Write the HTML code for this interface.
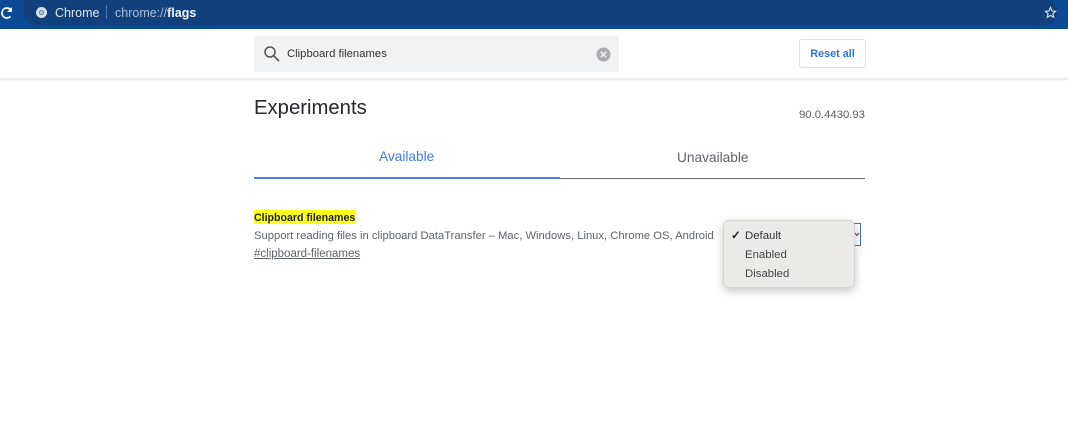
<!DOCTYPE html>
<html><head><meta charset="utf-8">
<style>
html,body{margin:0;padding:0;background:#fff}
body{width:1068px;height:448px;position:relative;overflow:hidden;font-family:"Liberation Sans",sans-serif}
.a{position:absolute;white-space:nowrap}
</style></head><body>
<div class="a" style="left:0;top:0;width:1068px;height:29px;background:#0b4a94"></div>
<div class="a" style="left:24px;top:0;width:1034px;height:25px;background:#12407c;border-radius:0 12px 12px 12px"></div>
<svg class="a" style="left:0;top:4px" width="14" height="18" viewBox="0 0 14 18"><path d="M10.500 12.500A5 5 0 1 1 10.500 5.500" fill="none" stroke="#fff" stroke-width="1.700"/><path d="M12 3v5H7z" fill="#fff"/></svg>
<svg class="a" style="left:35px;top:6px" width="13" height="13" viewBox="0 0 13 13"><circle cx="6.500" cy="6.500" r="5.500" fill="#d5dfea"/><circle cx="6.500" cy="6.500" r="2.600" fill="#5f82ad"/><circle cx="6.500" cy="6.500" r="1.800" fill="#fff" opacity=".5"/></svg>
<div class="a" style="left:55px;top:6px;font-size:12.500px;line-height:15px;color:#dfe7f1">Chrome</div>
<div class="a" style="left:106px;top:5px;width:1px;height:14px;background:#4f76a6"></div>
<div class="a" style="left:115px;top:6px;font-size:12.500px;line-height:15px;color:#a9bfd9">chrome://<span style="color:#f2f5f9;font-weight:bold">flags</span></div>
<svg class="a" style="left:1044px;top:6px" width="13" height="13" viewBox="0 0 13 13"><path d="M6.500 1.500l1.500 3.400 3.600.4-2.700 2.400.8 3.600-3.200-1.900-3.200 1.900.8-3.600L1.400 5.300l3.600-.4z" fill="none" stroke="#dfe6f0" stroke-width="1.100"/></svg>

<div class="a" style="left:0;top:78px;width:1068px;height:2px;background:#ececec"></div>
<div class="a" style="left:0;top:80px;width:1068px;height:1px;background:#f7f7f7"></div>
<div class="a" style="left:254px;top:36px;width:365px;height:36px;background:#f0f2f3"></div>
<svg class="a" style="left:263px;top:45px" width="18" height="18" viewBox="0 0 18 18"><circle cx="7" cy="7" r="5" fill="none" stroke="#555" stroke-width="1.500"/><path d="M10.800 10.800L16 16" stroke="#555" stroke-width="1.700"/></svg>
<div class="a" style="left:287px;top:47px;font-size:11.300px;line-height:15px;color:#333">Clipboard filenames</div>
<svg class="a" style="left:596px;top:47px" width="15" height="15" viewBox="0 0 15 15"><circle cx="7.500" cy="7.500" r="7" fill="#aaadb0"/><path d="M4.800 4.800l5.400 5.400M10.200 4.800l-5.400 5.400" stroke="#eee" stroke-width="1.600"/></svg>
<div class="a" style="left:799px;top:39px;width:65px;height:27px;border:1px solid #dfe1e4;border-radius:3px;background:#fff;text-align:center;font-size:10.800px;font-weight:bold;line-height:28px;color:#2a76dc">Reset all</div>

<div class="a" style="left:254px;top:96px;font-size:20.300px;line-height:25px;color:#26282b">Experiments</div>
<div class="a" style="left:799px;top:108px;font-size:11.300px;line-height:14px;color:#5a5d61">90.0.4430.93</div>

<div class="a" style="left:379px;top:149px;font-size:13.700px;line-height:16px;color:#3f7be0">Available</div>
<div class="a" style="left:677px;top:150px;font-size:13.700px;line-height:16px;color:#5f6368">Unavailable</div>
<div class="a" style="left:560px;top:178px;width:305px;height:1px;background:#6a6a6a"></div>
<div class="a" style="left:254px;top:177px;width:306px;height:2px;background:#4a80db"></div>

<div class="a" style="left:254px;top:210px;height:14px;width:102px;background:#ffff1a"></div>
<div class="a" style="left:254px;top:211px;font-size:10.600px;font-weight:bold;line-height:14px;color:#202124">Clipboard filenames</div>
<div class="a" style="left:254px;top:229px;font-size:11.220px;line-height:14px;color:#5f6368">Support reading files in clipboard DataTransfer – Mac, Windows, Linux, Chrome OS, Android</div>
<div class="a" style="left:254px;top:247px;font-size:11.500px;line-height:14px;color:#5f6368;text-decoration:underline">#clipboard-filenames</div>

<div class="a" style="left:840px;top:223px;width:21px;height:23px;border:1px solid #3e73c4;box-sizing:border-box;background:#fff"></div>
<svg class="a" style="left:854px;top:232px" width="6" height="5" viewBox="0 0 6 5"><path d="M1 1l2 2.500L5 1" fill="none" stroke="#44628c" stroke-width="1.200"/></svg>

<div class="a" style="left:723px;top:220px;width:130px;height:66px;background:#ebeae7;border:1px solid #d6d5d2;border-radius:6px;box-shadow:0 3px 9px rgba(0,0,0,.22)"></div>
<div class="a" style="left:731px;top:229px;font-size:11.500px;font-weight:bold;line-height:14px;color:#222">✓</div>
<div class="a" style="left:745px;top:229px;font-size:11.400px;line-height:14px;color:#333">Default</div>
<div class="a" style="left:745px;top:248px;font-size:11.400px;line-height:14px;color:#444">Enabled</div>
<div class="a" style="left:745px;top:267px;font-size:11.400px;line-height:14px;color:#444">Disabled</div>
</body></html>
